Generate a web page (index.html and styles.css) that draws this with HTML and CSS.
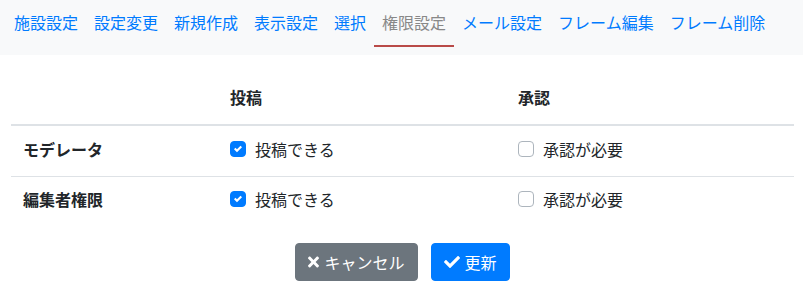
FILE: index.html
```html
<!DOCTYPE html>
<html lang="ja">
<head>
<meta charset="utf-8">
<title>権限設定</title>
<link rel="stylesheet" href="styles.css">
</head>
<body>
<nav class="tabs">
  <a class="tab" href="#">施設設定</a>
  <a class="tab" href="#">設定変更</a>
  <a class="tab" href="#">新規作成</a>
  <a class="tab" href="#">表示設定</a>
  <a class="tab" href="#">選択</a>
  <a class="tab active" href="#">権限設定</a>
  <a class="tab" href="#">メール設定</a>
  <a class="tab" href="#">フレーム編集</a>
  <a class="tab" href="#">フレーム削除</a>
</nav>
<main class="content">
  <table class="perm">
    <colgroup><col class="c1"><col class="c2"><col class="c3"></colgroup>
    <thead>
      <tr><th></th><th>投稿</th><th>承認</th></tr>
    </thead>
    <tbody>
      <tr>
        <th>モデレータ</th>
        <td><label class="check"><span class="box on"><svg viewBox="0 0 8 8" width="8" height="8"><path fill="#fff" d="M6.564.75l-3.59 3.612-1.538-1.55L0 4.26l2.974 2.99L8 2.193z"/></svg></span>投稿できる</label></td>
        <td><label class="check"><span class="box"></span>承認が必要</label></td>
      </tr>
      <tr>
        <th>編集者権限</th>
        <td><label class="check"><span class="box on"><svg viewBox="0 0 8 8" width="8" height="8"><path fill="#fff" d="M6.564.75l-3.59 3.612-1.538-1.55L0 4.26l2.974 2.99L8 2.193z"/></svg></span>投稿できる</label></td>
        <td><label class="check"><span class="box"></span>承認が必要</label></td>
      </tr>
    </tbody>
  </table>
  <div class="actions">
    <button class="btn btn-gray" type="button"><svg class="ico-x" viewBox="0 0 352 512" width="11" height="16"><path fill="#fff" d="M242.72 256l100.07-100.07c12.28-12.28 12.28-32.19 0-44.48l-22.24-22.24c-12.28-12.28-32.19-12.28-44.48 0L176 189.28 75.93 89.21c-12.28-12.28-32.19-12.28-44.48 0L9.21 111.45c-12.28 12.28-12.28 32.19 0 44.48L109.28 256 9.21 356.07c-12.28 12.28-12.28 32.19 0 44.48l22.24 22.24c12.28 12.28 32.2 12.28 44.48 0L176 322.72l100.07 100.07c12.28 12.28 32.2 12.28 44.48 0l22.24-22.24c12.28-12.28 12.28-32.19 0-44.48L242.72 256z"/></svg>キャンセル</button>
    <button class="btn btn-blue" type="button"><svg class="ico-check" viewBox="0 0 512 512" width="16" height="16"><path fill="#fff" d="M173.898 439.404l-166.4-166.4c-9.997-9.997-9.997-26.206 0-36.204l36.203-36.204c9.997-9.998 26.207-9.998 36.204 0L192 312.69 432.095 72.596c9.997-9.997 26.207-9.997 36.204 0l36.203 36.204c9.997 9.997 9.997 26.206 0 36.204l-294.4 294.401c-9.998 9.997-26.207 9.997-36.204-.001z"/></svg>更新</button>
  </div>
</main>
</body>
</html>
```

FILE: styles.css
```css
* { box-sizing: border-box; }
html, body {
  margin: 0;
  padding: 0;
  background: #fff;
  color: #212529;
  font-family: "Noto Sans CJK JP", "Noto Sans", sans-serif;
  font-size: 16px;
  line-height: 24px;
}
.tabs {
  display: flex;
  height: 55px;
  padding: 10px 0 0 6px;
  background: #f8f9fa;
}
.tab {
  display: block;
  padding: 0 8px 11px;
  line-height: 24px;
  color: #007bff;
  text-decoration: none;
  border-bottom: 2px solid transparent;
  height: 37px;
}
.tab.active {
  color: #888;
  border-bottom-color: #b94a48;
}
.content {
  padding: 21px 9px 0 11px;
}
.perm {
  width: 100%;
  border-collapse: separate;
  border-spacing: 0;
  table-layout: fixed;
}
.c1 { width: 207px; }
.c2 { width: 288px; }
.c3 { width: 288px; }
.perm th, .perm td {
  text-align: left;
  vertical-align: top;
  padding: 11px 12px 15px;
  line-height: 24px;
}
.perm th { font-weight: bold; }
.perm thead th {
  padding-top: 9px;
  padding-bottom: 15px;
  border-bottom: 2px solid #dee2e6;
}
.perm tbody tr + tr th,
.perm tbody tr + tr td {
  border-top: 1px solid #dee2e6;
  padding-top: 10px;
}
.check {
  display: flex;
  align-items: center;
  gap: 9px;
  font-weight: normal;
}
.box {
  width: 16px;
  height: 16px;
  border: 1px solid #adb5bd;
  border-radius: 4px;
  background: #fff;
  display: flex;
  align-items: center;
  justify-content: center;
  flex: none;
}
.box.on {
  background: #007bff;
  border-color: #007bff;
}
.box svg { display: block; }
.actions {
  display: flex;
  justify-content: center;
  gap: 13px;
  margin-top: 17px;
}
.btn {
  display: inline-flex;
  align-items: center;
  height: 38px;
  padding: 0 12px;
  border: 1px solid transparent;
  border-radius: 4px;
  color: #fff;
  font-family: inherit;
  font-size: 16px;
  line-height: 24px;
}
.btn-gray { background: #6c757d; border-color: #6c757d; }
.btn-blue { background: #007bff; border-color: #007bff; }
.ico-x { margin-right: 5px; display: block; }
.ico-check { margin-right: 5px; display: block; }
```
